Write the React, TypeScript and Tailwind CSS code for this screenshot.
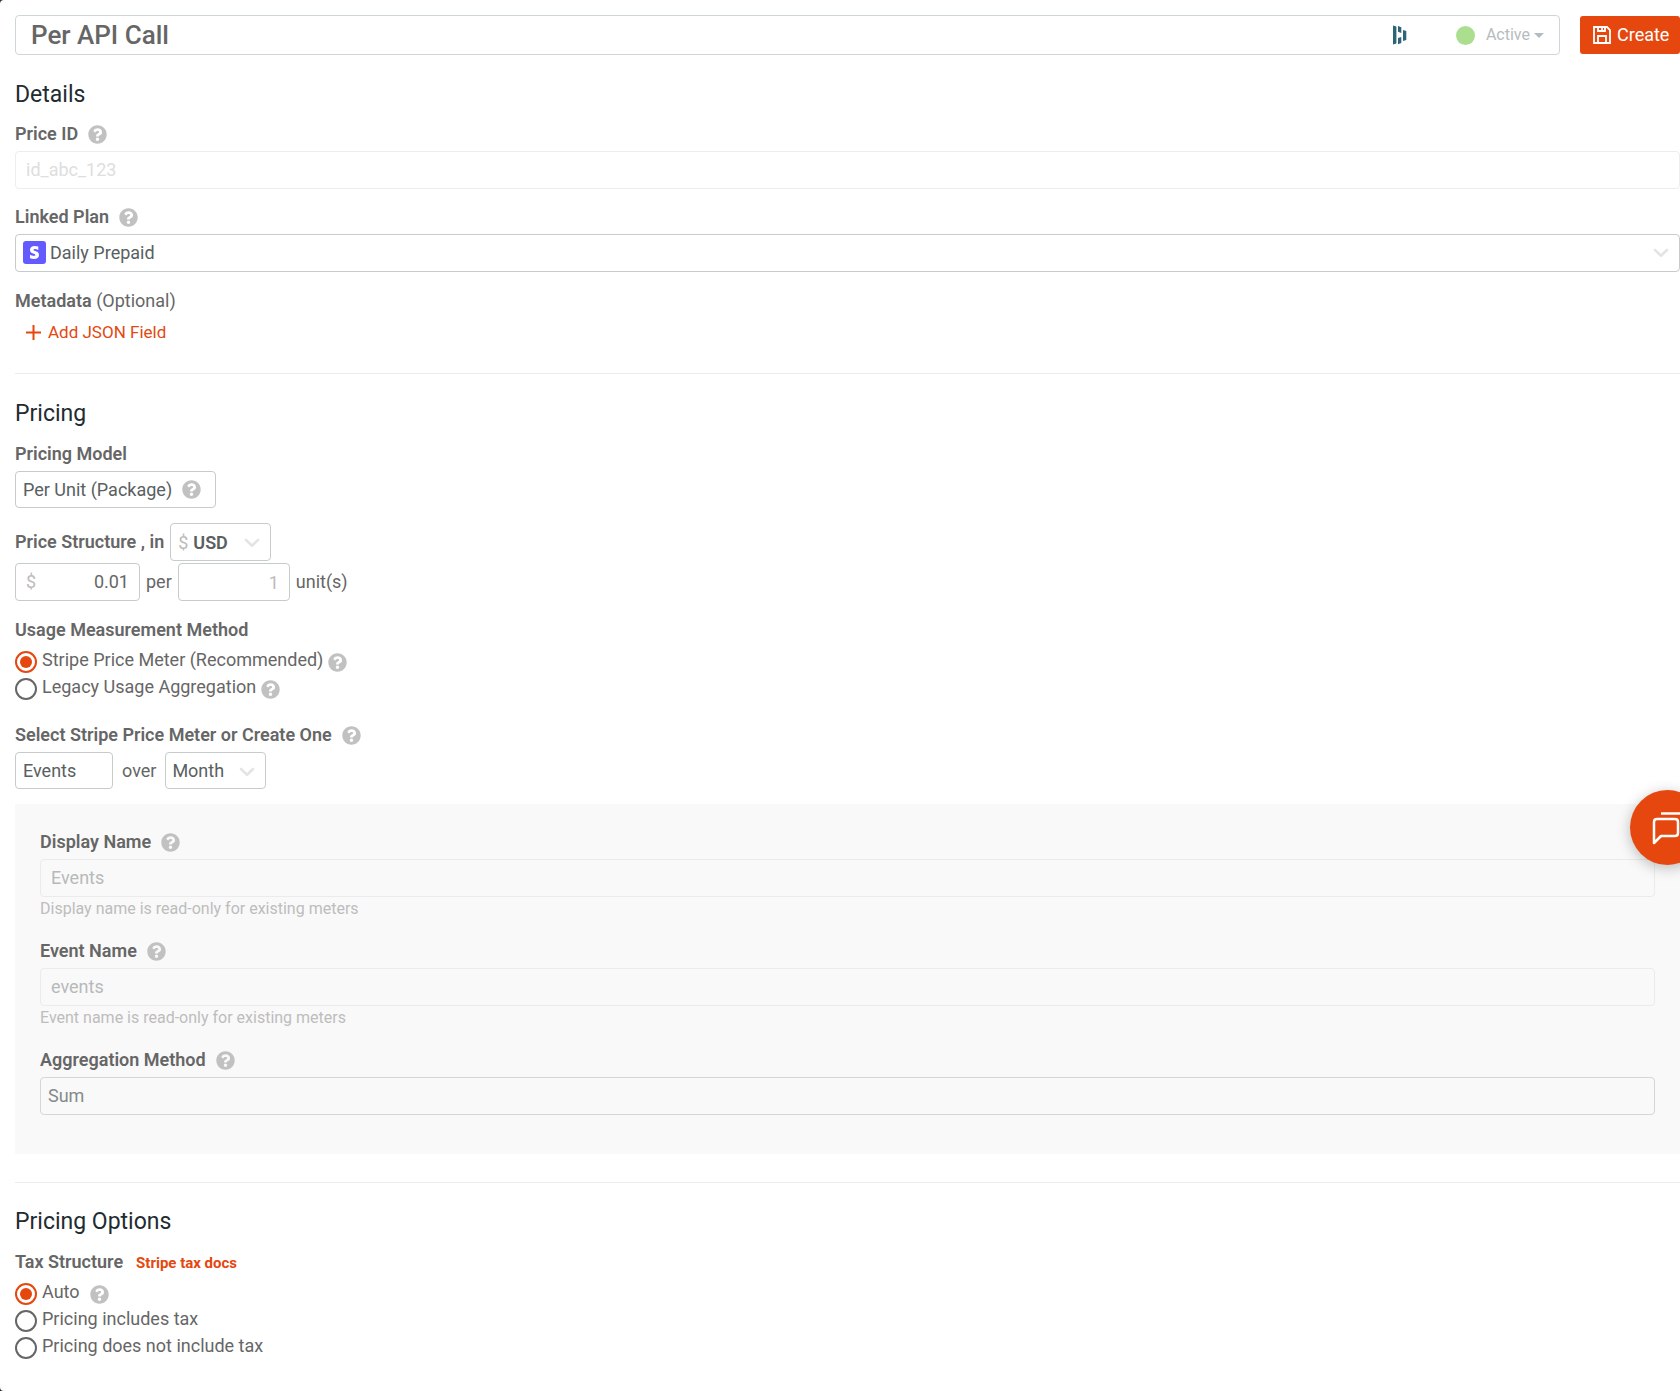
import React, { useState } from "react";

const fieldText = "text-[18px] leading-6";

function Help({ label }: { label: string }) {
  return (
    <button type="button" aria-label={label} className="size-[19px] shrink-0 text-[#c1c1c1]">
      <svg viewBox="0 0 512 512" className="size-full" fill="currentColor" aria-hidden="true">
        <path d="M504 256c0 136.997-111.043 248-248 248S8 392.997 8 256C8 119.083 119.043 8 256 8s248 111.083 248 248zM262.655 90c-54.497 0-89.255 22.957-116.549 63.758-3.536 5.286-2.353 12.415 2.715 16.258l34.699 26.31c5.205 3.947 12.621 3.008 16.665-2.122 17.864-22.658 30.113-35.797 57.303-35.797 20.429 0 45.698 13.148 45.698 32.958 0 14.976-12.363 22.667-32.534 33.976C247.128 238.528 216 254.941 216 296v4c0 6.627 5.373 12 12 12h56c6.627 0 12-5.373 12-12v-1.333c0-28.462 83.186-29.647 83.186-106.667 0-58.002-60.165-102-116.531-102zM256 338c-25.365 0-46 20.635-46 46 0 25.364 20.635 46 46 46s46-20.636 46-46c0-25.365-20.635-46-46-46z" />
      </svg>
    </button>
  );
}

function Chevron() {
  return (
    <svg viewBox="0 0 16 16" className="pointer-events-none size-4 shrink-0" fill="none" stroke="#e4e4e4" strokeWidth="2.6" strokeLinecap="round" strokeLinejoin="round" aria-hidden="true">
      <path d="M2 6 8 11.7 14 6" />
    </svg>
  );
}

function Caption({ htmlFor, text, help, extra }: { htmlFor?: string; text: string; help?: boolean; extra?: string }) {
  return (
    <div className="flex h-7 items-center gap-[10px]">
      <label htmlFor={htmlFor} className="text-[18px] leading-6 font-semibold text-[#666]">
        {text}
        {extra && <span className="font-normal"> {extra}</span>}
      </label>
      {help && <Help label={`About ${text}`} />}
    </div>
  );
}

function Choice({ name, label, checked, onPick, help, helpGap }: { name: string; label: string; checked: boolean; onPick: () => void; help?: boolean; helpGap?: boolean }) {
  return (
    <div className={helpGap ? "flex h-[27px] items-center gap-[10px]" : "flex h-[27px] items-center gap-[5px]"}>
      <label className="flex items-center gap-[5px] text-[18px] leading-6 text-[#666]">
        <input
          type="radio"
          name={name}
          checked={checked}
          onChange={onPick}
          className="mt-[2px] size-[22px] appearance-none rounded-full border-2 border-[#666] bg-white checked:border-[#e5470f] checked:bg-[#e5470f] checked:bg-clip-content checked:p-[3px]"
        />
        <span className="pb-px">{label}</span>
      </label>
      {help && <span className="flex pt-1"><Help label={`About ${label}`} /></span>}
    </div>
  );
}

function Heading({ children }: { children: string }) {
  return <h2 className="text-[23px] leading-8 text-[#222b30]">{children}</h2>;
}

export default function App() {
  const [method, setMethod] = useState(0);
  const [tax, setTax] = useState(0);
  const [name, setName] = useState("Per API Call");
  const [price, setPrice] = useState("0.01");

  return (
    <div className="bg-[#2b2b2b]">
      <main className="relative min-h-screen overflow-hidden rounded-l-[4px] bg-white pb-6 pl-[15px] font-[Roboto,sans-serif] text-[#666]">
        <header className="flex items-center gap-5 pt-[15px]">
          <div className="flex h-10 flex-1 items-center rounded border border-[#ced6d9] pr-[15px] pl-[15px]">
            <input aria-label="Price name" value={name} onChange={(e) => setName(e.target.value)} className="min-w-0 flex-1 text-[26px] leading-8 font-medium text-[#666] outline-none" />
            <svg viewBox="0 0 14 20" className="h-5 w-[14px]" fill="#2c6478" aria-hidden="true">
              <path d="M0 .5 3.400 1.500V18.500L0 19.500ZM5 1 8.300 2.300V8L5 6.800ZM10 5 13.300 6V15L10 16ZM5 13 8.300 12V18L5 19.300Z" />
            </svg>
            <span className="ml-[49px] size-[19px] rounded-full bg-[#abdf8f]" />
            <button type="button" className="ml-[11px] flex items-center gap-1 text-base text-[#b5bcc0]">
              Active
              <svg viewBox="0 0 10 5" className="h-[5px] w-[10px]" fill="currentColor" aria-hidden="true"><path d="M0 0H10L5 5Z" /></svg>
            </button>
          </div>
          <button type="button" className="flex h-[38px] w-[100px] items-center gap-[6px] rounded-[3px] bg-[#e5470f] pb-px pl-[13px] text-[18px] text-white">
            <svg viewBox="0 0 18 18" className="size-[18px]" fill="none" stroke="currentColor" strokeWidth="1.8" aria-hidden="true">
              <path d="M1 1H14L17 4V17H1ZM5 1V5H12V1M5 17V10H13V17M9 2V4" />
            </svg>
            Create
          </button>
        </header>

        <section className="pt-6">
          <Heading>Details</Heading>
          <div className="pt-[9px]">
            <Caption htmlFor="pid" text="Price ID" help />
            <input id="pid" disabled placeholder="id_abc_123" className="mt-[3px] block h-[38px] w-full rounded border border-[#ededed] px-[10px] pb-[2px] text-[18px] placeholder:text-[#dedede]" />
          </div>
          <div className="pt-[14px]">
            <Caption htmlFor="plan" text="Linked Plan" help />
            <div className="mt-[3px] flex h-[38px] items-center rounded border border-[#c6cbcb] pr-[10px] pb-[2px] pl-[7px]">
              <svg viewBox="0 0 23 23" className="size-[23px]" aria-hidden="true">
                <rect width="23" height="23" rx="3" fill="#635bff" />
                <path fill="#fff" d="M10.6 9c0-.6.5-.9 1.200-.9 1.100 0 2.400.3 3.500.9V5.600c-1.200-.5-2.300-.7-3.500-.7-2.900 0-4.800 1.500-4.800 4.100 0 4 5.400 3.300 5.400 5 0 .7-.6.900-1.400.9-1.200 0-2.800-.5-4-1.200v3.500c1.400.6 2.700.8 4 .8 3 0 5-1.400 5-4.100 0-4.200-5.400-3.500-5.400-4.900Z" />
              </svg>
              <select id="plan" className="flex-1 appearance-none pl-1 text-[18px] text-[#59605f] outline-none"><option>Daily Prepaid</option></select>
              <Chevron />
            </div>
          </div>
          <div className="pt-[15px]">
            <Caption text="Metadata" extra="(Optional)" />
            <button type="button" className="mt-[5px] ml-[11px] flex items-center gap-[7px] text-[17px] leading-6 text-[#e5470f]">
              <svg viewBox="0 0 15 15" className="size-[15px]" stroke="currentColor" strokeWidth="2" aria-hidden="true"><path d="M7.500 0V15M0 7.500H15" /></svg>
              Add JSON Field
            </button>
          </div>
        </section>

        <hr className="mt-[29px] border-[#ececec]" />

        <section className="pt-6">
          <Heading>Pricing</Heading>
          <div className="pt-[10px]">
            <Caption htmlFor="model" text="Pricing Model" />
            <div className="mt-[3px] flex h-[37px] w-[201px] items-center rounded border border-[#c6cbcb] pl-[7px]">
              <select id="model" className="appearance-none text-[18px] text-[#59605f] outline-none"><option>Per Unit (Package)</option></select>
              <span className="ml-[9px] flex"><Help label="About per unit pricing" /></span>
            </div>
          </div>
          <div className="flex items-center gap-[6px] pt-[15px]">
            <label htmlFor="cur" className={`${fieldText} font-semibold`}>Price Structure , in</label>
            <div className="flex h-[38px] w-[101px] items-center rounded border border-[#c6cbcb] pr-[10px] pl-[7px] text-[18px]">
              <span className="text-[#bcbcbc]">$</span>
              <select id="cur" className="min-w-0 flex-1 appearance-none pl-[5px] font-semibold text-[#59605f] outline-none"><option>USD</option></select>
              <Chevron />
            </div>
          </div>
          <div className={`flex items-center gap-[6px] pt-[2px] ${fieldText}`}>
            <div className="flex h-[38px] w-[125px] items-center rounded border border-[#c6cbcb] px-[10px]">
              <span className="text-[#bcbcbc]">$</span>
              <input aria-label="Price" value={price} onChange={(e) => setPrice(e.target.value)} className="min-w-0 flex-1 text-right text-[#666] outline-none" />
            </div>
            <label htmlFor="units">per</label>
            <input id="units" placeholder="1" className="h-[38px] w-28 rounded border border-[#c6cbcb] px-[10px] text-right outline-none placeholder:text-[#bcbcbc]" />
            <span>unit(s)</span>
          </div>
          <fieldset className="mt-[15px]">
            <legend className={`flex h-7 items-center font-semibold ${fieldText}`}>Usage Measurement Method</legend>
            <div className="pt-[3px]">
              <Choice name="method" label="Stripe Price Meter (Recommended)" checked={method === 0} onPick={() => setMethod(0)} help />
              <Choice name="method" label="Legacy Usage Aggregation" checked={method === 1} onPick={() => setMethod(1)} help />
            </div>
          </fieldset>
          <div className="pt-5">
            <Caption htmlFor="meter" text="Select Stripe Price Meter or Create One" help />
            <div className={`mt-[3px] flex items-center gap-[9px] ${fieldText}`}>
              <select id="meter" className="h-[37px] w-[98px] appearance-none rounded border border-[#c6cbcb] pl-[7px] text-[#59605f] outline-none"><option>Events</option></select>
              <label htmlFor="period">over</label>
              <div className="flex h-[37px] w-[101px] items-center rounded border border-[#c6cbcb] pr-[10px] pl-[6px]">
                <select id="period" className="min-w-0 flex-1 appearance-none text-[#59605f] outline-none"><option>Month</option></select>
                <Chevron />
              </div>
            </div>
          </div>
          <div className="mt-[15px] bg-[#f9f9f9] px-[25px] pt-6 pb-[39px]">
            <Caption htmlFor="dn" text="Display Name" help />
            <input id="dn" disabled value="Events" className="mt-[3px] block h-[38px] w-full rounded border border-[#ebebeb] px-[10px] pb-[2px] text-[18px] text-[#b7b9b9]" />
            <p className="text-base leading-6 text-[#bdbdbd]">Display name is read-only for existing meters</p>
            <div className="pt-4">
              <Caption htmlFor="en" text="Event Name" help />
              <input id="en" disabled value="events" className="mt-[3px] block h-[38px] w-full rounded border border-[#ebebeb] px-[10px] pb-[2px] text-[18px] text-[#b7b9b9]" />
              <p className="text-base leading-6 text-[#bdbdbd]">Event name is read-only for existing meters</p>
            </div>
            <div className="pt-4">
              <Caption htmlFor="am" text="Aggregation Method" help />
              <select id="am" disabled className="mt-[3px] block h-[38px] w-full appearance-none rounded border border-[#d4d7d7] px-[7px] pb-[2px] text-[18px] text-[#858a89] opacity-100"><option>Sum</option></select>
            </div>
          </div>
        </section>

        <hr className="mt-7 border-[#ececec]" />

        <section className="pt-[23px]">
          <Heading>Pricing Options</Heading>
          <fieldset className="mt-[10px]">
            <legend className="flex h-7 items-center gap-[13px]">
              <span className={`font-semibold ${fieldText}`}>Tax Structure</span>
              <a href="#tax-docs" className="pt-[2px] text-[15px] leading-6 font-bold text-[#e5470f]">Stripe tax docs</a>
            </legend>
            <div className="pt-[3px]">
              <Choice name="tax" label="Auto" checked={tax === 0} onPick={() => setTax(0)} help helpGap />
              <Choice name="tax" label="Pricing includes tax" checked={tax === 1} onPick={() => setTax(1)} />
              <Choice name="tax" label="Pricing does not include tax" checked={tax === 2} onPick={() => setTax(2)} />
            </div>
          </fieldset>
        </section>

        <button type="button" aria-label="Open chat" className="absolute top-[790px] -right-[25px] flex size-[75px] items-center justify-center rounded-full bg-[#e5470f] text-white shadow-[0_3px_14px_rgba(0,0,0,0.25)]">
          <svg viewBox="0 0 34 34" className="size-[34px]" fill="none" stroke="currentColor" strokeWidth="2.500" strokeLinejoin="round" aria-hidden="true">
            <path d="M6 8H24Q27 8 27 11V22Q27 25 24 25H10L3 32V11Q3 8 6 8ZM10 2.500H30Q33 2.500 33 5.500V22" />
          </svg>
        </button>
      </main>
    </div>
  );
}
